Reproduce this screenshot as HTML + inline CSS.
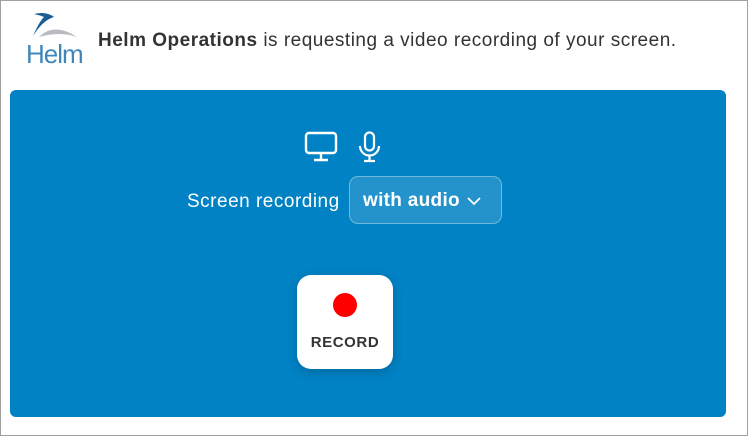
<!DOCTYPE html>
<html><head><style>
*{margin:0;padding:0;box-sizing:border-box}
body{width:748px;height:436px;background:#fff;font-family:"Liberation Sans",sans-serif;position:relative;overflow:hidden}
.frame{position:absolute;left:0;top:0;width:748px;height:436px;border:1px solid #a0a0a0}
.hdr{position:absolute;left:98px;top:30px;font-size:19px;letter-spacing:0.5px;color:#333}
.panel{position:absolute;left:10px;top:90px;width:716px;height:327px;background:#0082c4;border-radius:6px}
.lbl{position:absolute;left:187px;top:191px;font-size:19px;letter-spacing:0.5px;color:#fff}
.dd{position:absolute;left:349px;top:176px;width:153px;height:48px;border-radius:9px;background:rgba(255,255,255,0.14);border:1.5px solid rgba(255,255,255,0.35);color:#fff;font-weight:bold;font-size:19px;letter-spacing:0.3px;padding:13px 0 0 13px}
.rec{position:absolute;left:297px;top:275px;width:96px;height:94px;background:#fff;border-radius:14px;box-shadow:0 3px 10px rgba(0,0,0,0.2)}
.dot{position:absolute;left:36px;top:18px;width:24px;height:24px;border-radius:50%;background:#f00}
.rt{position:absolute;left:0;width:96px;top:59px;text-align:center;font-weight:bold;font-size:15px;color:#333;letter-spacing:.6px}
</style></head><body>
<div class="frame"></div>
<svg style="position:absolute;left:22px;top:10px" width="60" height="58" viewBox="0 0 60 58">
<path d="M12 4 Q24 1 32 7 Q21 10 11 26 Q17 12 22 7 Q17 5 12 4Z" fill="#1a5e96"/>
<path d="M17 27 Q32 12 55 27 Q38 21 17 27Z" fill="#b8bcc0"/>
<text x="4" y="53" font-family="Liberation Sans" font-size="26" fill="#3f86bb" letter-spacing="-1">Helm</text>
</svg>
<div class="hdr"><b>Helm Operations</b> is requesting a video recording of your screen.</div>
<div class="panel"></div>
<svg style="position:absolute;left:304px;top:131px" width="36" height="32" viewBox="0 0 36 32" fill="none" stroke="#fff" stroke-width="2.4">
<rect x="2" y="2" width="30" height="20" rx="3"/><path d="M17 22v6M10 29h14"/></svg>
<svg style="position:absolute;left:357px;top:131px" width="26" height="32" viewBox="0 0 26 32" fill="none" stroke="#fff" stroke-width="2.2">
<rect x="8" y="1.5" width="9" height="18" rx="4.5"/><path d="M3 15a9.5 9.5 0 0 0 19 0M12.5 24.5v5M7 30h11"/></svg>
<div class="lbl">Screen recording</div>
<div class="dd">with audio <svg width="16" height="10" viewBox="0 0 16 10"><path d="M2 2l6 6 6-6" fill="none" stroke="#fff" stroke-width="1.8"/></svg></div>
<div class="rec"><div class="dot"></div><div class="rt">RECORD</div></div>
</body></html>
